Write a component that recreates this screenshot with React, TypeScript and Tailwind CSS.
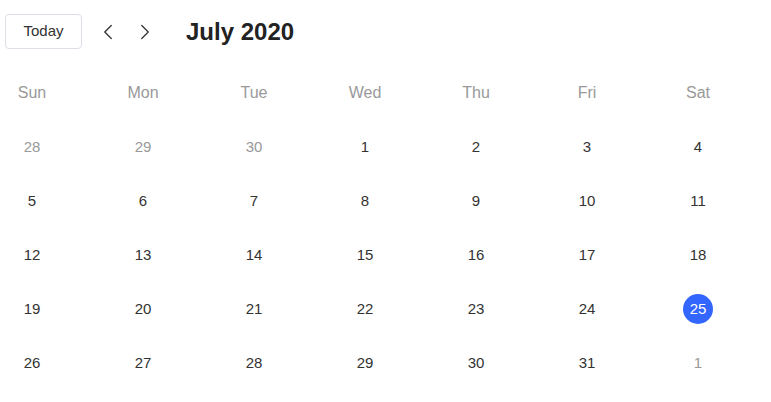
import { ChevronLeft, ChevronRight } from "lucide-react";

const weekDays = ["Sun", "Mon", "Tue", "Wed", "Thu", "Fri", "Sat"];

type Day = { n: number; muted?: boolean; selected?: boolean };

function buildMonth(): Day[] {
	const days: Day[] = [{ n: 28, muted: true }, { n: 29, muted: true }, { n: 30, muted: true }];
	for (let i = 1; i <= 31; i++) days.push({ n: i, selected: i === 25 });
	days.push({ n: 1, muted: true });
	return days;
}

export default function App() {
	const days = buildMonth();

	return (
		<div className="w-[771px] h-[402px] bg-white font-['Liberation_Sans',Arial,sans-serif] text-[#333]">
			<div className="flex items-center pl-[5px] pt-[14px] h-[49px]">
				<button
					type="button"
					className="h-[35px] w-[77px] border border-[#dcdfe6] rounded-[4px] text-[15px] text-[#333]"
				>
					Today
				</button>
				<div className="flex items-center ml-[13px] gap-[11px] text-[#333]">
					<ChevronLeft size={26} strokeWidth={1.2} />
					<ChevronRight size={26} strokeWidth={1.2} />
				</div>
				<h1 className="ml-[28px] text-[24px] font-bold text-[#222]">July 2020</h1>
			</div>
			<div className="grid grid-cols-[repeat(7,64px)] gap-x-[47px] mt-[17px]">
				{weekDays.map((d) => (
					<div key={d} className="h-[54px] flex items-center justify-center text-[16px] text-[#999]">
						{d}
					</div>
				))}
				{days.map((d, i) => (
					<div key={i} className="h-[54px] flex items-center justify-center text-[15px]">
						{d.selected ? (
							<span className="w-[30px] h-[30px] rounded-full bg-[#3366ff] text-white flex items-center justify-center">
								{d.n}
							</span>
						) : (
							<span className={d.muted ? "text-[#999]" : "text-[#333]"}>{d.n}</span>
						)}
					</div>
				))}
			</div>
		</div>
	);
}
